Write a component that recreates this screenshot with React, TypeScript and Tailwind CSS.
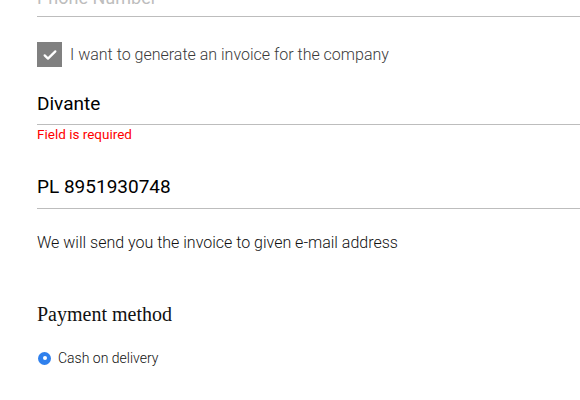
import React from "react";

export default function App() {
  return (
    <div
      className="w-[580px] h-[400px] bg-white overflow-hidden pl-[37px]"
      style={{ fontFamily: "Roboto, 'Liberation Sans', sans-serif" }}
    >
      <div className="-mt-[14px] pb-[6px] border-b border-[#bdbdbd] text-[18px] leading-[24px] text-[#bdbdbd]">
        Phone Number
      </div>

      <div className="mt-[25px] flex items-center gap-[8px]">
        <div className="w-[25px] h-[25px] bg-[#808080] flex items-center justify-center">
          <svg width="16" height="16" viewBox="0 0 24 24" fill="none">
            <path d="M4 12.5l5 5L20 6.5" stroke="white" strokeWidth="3.4" strokeLinecap="round" strokeLinejoin="round" />
          </svg>
        </div>
        <span className="text-[16px] leading-[24px] font-light text-[#3a3a3a]">
          I want to generate an invoice for the company
        </span>
      </div>

      <div className="mt-[25px] pb-[8px] border-b border-[#bdbdbd] text-[19px] leading-[24px] text-black">
        Divante
      </div>
      <div className="pt-[1px] text-[13.5px] leading-[16px] text-[#ff0000]">Field is required</div>

      <div className="mt-[33px] pb-[9px] border-b border-[#bdbdbd] text-[19px] leading-[24px] text-black">
        PL 8951930748
      </div>

      <div className="mt-[22px] text-[16px] leading-[24px] font-light text-[#111111]">
        We will send you the invoice to given e-mail address
      </div>

      <div
        className="mt-[45px] text-[20px] leading-[28px] text-[#111111]"
        style={{ fontFamily: "'Liberation Serif', serif" }}
      >
        Payment method
      </div>

      <div className="mt-[22px] flex items-center gap-[7px]">
        <div className="ml-[1px] w-[13px] h-[13px] rounded-full bg-[#2f80ed] flex items-center justify-center">
          <div className="w-[4px] h-[4px] rounded-full bg-white" />
        </div>
        <span className="text-[14px] leading-[16px] font-light text-[#111111]">Cash on delivery</span>
      </div>
    </div>
  );
}
